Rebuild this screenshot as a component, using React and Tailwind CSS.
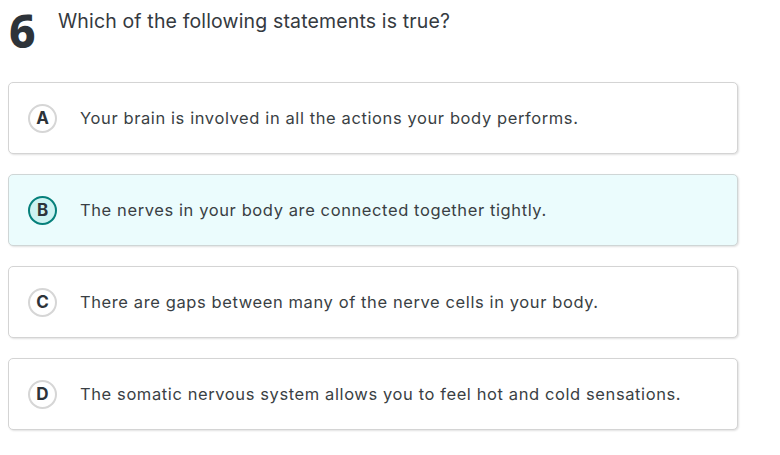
const options = [
  { letter: 'A', text: 'Your brain is involved in all the actions your body performs.' },
  { letter: 'B', text: 'The nerves in your body are connected together tightly.', selected: true },
  { letter: 'C', text: 'There are gaps between many of the nerve cells in your body.' },
  { letter: 'D', text: 'The somatic nervous system allows you to feel hot and cold sensations.' },
]

function Option({ letter, text, selected }) {
  return (
    <div
      className={[
        'flex h-[72px] items-center rounded-[5px] border pl-[19px] shadow-[1px_1px_2px_rgba(0,0,0,0.12)]',
        selected ? 'border-[#cfd6d6] bg-[#ebfcfd]' : 'border-[#d4d4d4] bg-white',
      ].join(' ')}
    >
      <span
        className={[
          'flex h-[29px] w-[29px] shrink-0 items-center justify-center rounded-full border-2 text-[17px] font-bold leading-none',
          selected ? 'border-[#06807b] bg-[#cdf3f2] text-[#2d3339]' : 'border-[#d6d6d6] bg-white text-[#2d3339]',
        ].join(' ')}
      >
        {letter}
      </span>
      <span className="ml-[23px] text-[16.5px] tracking-[0.6px] text-[#3a3f44]">{text}</span>
    </div>
  )
}

export default function App() {
  return (
    <div className="h-[455px] w-[780px] bg-white px-2 font-['Inter',sans-serif]">
      <div className="flex items-start pt-[4px]">
        <span className="w-[50px] pl-[1px] font-['Noto_Sans',sans-serif] text-[46px] font-extrabold leading-[52px] text-[#2d3339]">
          6
        </span>
        <h1 className="mt-[3px] text-[19.5px] tracking-[0.15px] text-[#353a3f]">Which of the following statements is true?</h1>
      </div>
      <div className="mt-[26px] flex w-[730px] flex-col gap-[20px]">
        {options.map((option) => (
          <Option key={option.letter} {...option} />
        ))}
      </div>
    </div>
  )
}
